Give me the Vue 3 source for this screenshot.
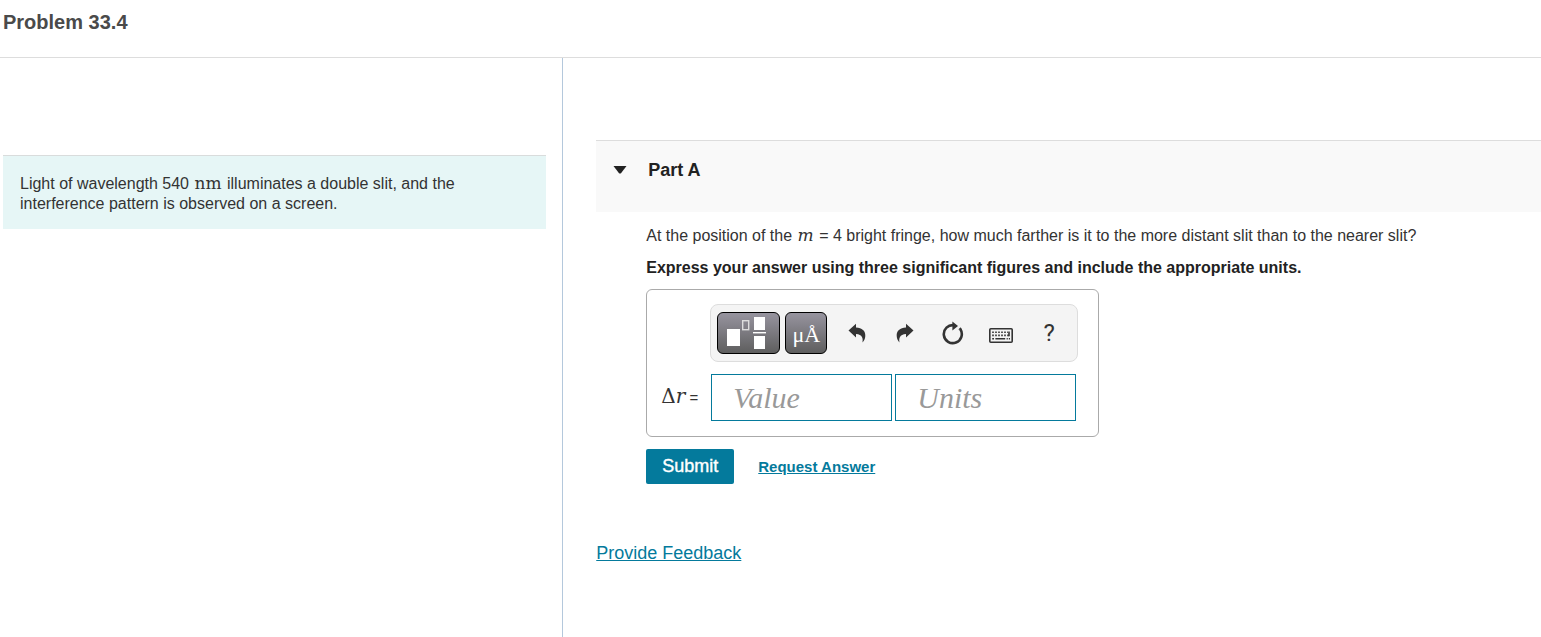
<script setup>
import { ref } from 'vue'

const open = ref(true)
const value = ref('')
const units = ref('')

const reset = () => {
  value.value = ''
  units.value = ''
}
</script>

<template>
  <div class="page">
    <header class="page-header">
      <h1>Problem 33.4</h1>
    </header>

    <div class="columns">
      <aside class="intro-pane">
        <p class="intro">
          Light of wavelength 540 <span class="math">nm</span> illuminates a double slit, and the interference pattern is observed on a screen.
        </p>
      </aside>

      <main class="work-pane">
        <header class="part-header">
          <button type="button" class="part-toggle" :aria-expanded="open" @click="open = !open">
            <svg viewBox="0 0 14 8" width="14" height="8">
              <path fill="currentColor" d="M0.5 0H13.5L8 7.2Q7 8 6 7.2Z" />
            </svg>
            <span>Part A</span>
          </button>
        </header>

        <section v-show="open" class="part-body">
          <p class="question">
            At the position of the <i class="math">m</i> = 4 bright fringe, how much farther is it to the more distant slit than to the nearer slit?
          </p>
          <p class="instructions">Express your answer using three significant figures and include the appropriate units.</p>

          <form @submit.prevent>
            <div class="answer-box">
              <div class="toolbar">
                <button type="button" class="tool-dark templates" aria-label="Templates">
                  <svg viewBox="0 0 40 32" width="40" height="32">
                    <rect x="1" y="12" width="13" height="17" fill="#fff" />
                    <rect x="16.7" y="3.7" width="6" height="9" fill="none" stroke="#ddd" stroke-width="1.4" />
                    <rect x="28" y="0" width="11" height="13" fill="#fff" />
                    <rect x="27" y="15" width="13" height="1.4" fill="#fff" />
                    <rect x="28" y="19" width="11" height="13" fill="#fff" />
                  </svg>
                </button>
                <button type="button" class="tool-dark symbols" aria-label="Symbols">μÅ</button>
                <button type="button" class="tool" aria-label="Undo">
                  <svg viewBox="0 0 18 20" width="18" height="20">
                    <path fill="currentColor" d="M0.5 7.5L8 0.8V4.6C14 4.8 17.6 8 17.3 13C17.2 15.8 16 18 14.4 19.6C15.4 15.8 14.4 11.2 8 11V14.4Z" />
                  </svg>
                </button>
                <button type="button" class="tool" aria-label="Redo">
                  <svg viewBox="0 0 18 20" width="18" height="20">
                    <path fill="currentColor" d="M17.5 7.5L10 0.8V4.6C4 4.8 0.4 8 0.7 13C0.8 15.8 2 18 3.6 19.6C2.6 15.8 3.6 11.2 10 11V14.4Z" />
                  </svg>
                </button>
                <button type="button" class="tool" aria-label="Reset" @click="reset">
                  <svg viewBox="0 0 22 24" width="22" height="24">
                    <path fill="none" stroke="currentColor" stroke-width="2.6" d="M12 4.2A9 9 0 1 0 18.2 8" />
                    <path fill="currentColor" d="M10.4 0.4L16 5L10.4 9.6Z" />
                    <path fill="currentColor" d="M16.3 8.6L18.6 6.2L20 9Z" />
                  </svg>
                </button>
                <button type="button" class="tool keyboard" aria-label="Keyboard shortcuts">
                  <svg viewBox="0 0 24 15" width="24" height="15">
                    <rect x="0.8" y="0.8" width="22.4" height="13.4" rx="1" fill="none" stroke="currentColor" stroke-width="1.6" />
                    <g stroke="currentColor" stroke-width="1.6">
                      <path stroke-dasharray="1.6 1.4" d="M3.2 4.2H19" />
                      <path stroke-dasharray="1.6 1.4" d="M3.2 7.4H21" />
                      <path d="M20 3.4V8.2M3.2 10.8H5M6.4 10.8H16.2M17.6 10.8H18.8M19.8 10.8H21" />
                    </g>
                  </svg>
                </button>
                <button type="button" class="tool help" aria-label="Help">?</button>
              </div>

              <div class="answer-row">
                <label for="value"><span class="math">Δ<i>r</i></span> =</label>
                <div class="fields">
                  <input id="value" v-model="value" type="text" placeholder="Value" />
                  <input v-model="units" type="text" placeholder="Units" aria-label="Units" />
                </div>
              </div>
            </div>

            <div class="form-actions">
              <button type="submit" class="btn-submit">Submit</button>
              <a href="#" class="request">Request Answer</a>
            </div>
          </form>
        </section>

        <a href="#" class="feedback">Provide Feedback</a>
      </main>
    </div>
  </div>
</template>

<style>
body {
  margin: 0;
  background: #fff;
}
</style>

<style scoped>
.page {
  display: flex;
  flex-direction: column;
  min-height: 100vh;
  font-family: "Liberation Sans", Arial, sans-serif;
  font-size: 16px;
  line-height: 20px;
  color: #333;
}

.page-header {
  padding: 10px 3px 23px;
  border-bottom: 1px solid #ddd;
}

h1 {
  margin: 0;
  font-size: 20px;
  line-height: 24px;
  color: #4a4a4a;
}

.columns {
  display: flex;
  flex: 1;
}

.intro-pane {
  box-sizing: border-box;
  width: 36.55%;
  padding: 97px 16px 0 3px;
  border-right: 1px solid #b4c8dc;
}

.intro {
  margin: 0;
  padding: 18px 80px 15px 17px;
  border-top: 1px solid #d9dcdc;
  background: #e6f6f6;
}

.math {
  margin: 0 1px;
  font-family: "DejaVu Serif", serif;
  font-size: 17px;
  line-height: 16px;
}

.work-pane {
  flex: 1;
  padding: 82px 0 0 33px;
}

.part-header {
  padding: 19px 17px 32px;
  border-top: 1px solid #ddd;
  background: #f9f9f9;
}

.part-toggle {
  display: flex;
  align-items: center;
  gap: 21px;
  padding: 0;
  border: none;
  background: none;
  color: #222;
  font: bold 18px/20px "Liberation Sans", Arial, sans-serif;
  cursor: pointer;
}

.part-body {
  padding: 14px 0 0 50px;
}

.question {
  margin: 0 0 12px;
}

.instructions {
  margin: 0 0 11px;
  font-weight: bold;
  color: #222;
}

.answer-box {
  box-sizing: border-box;
  width: fit-content;
  padding: 14px 20px 15px 14px;
  border: 1px solid #aaa;
  border-radius: 6px;
}

.toolbar {
  display: flex;
  align-items: center;
  margin-left: 49px;
  padding: 7px 4px 7px 6px;
  border: 1px solid #ddd;
  border-radius: 8px;
  background: #f4f4f4;
}

.toolbar button {
  display: flex;
  align-items: center;
  justify-content: center;
  box-sizing: border-box;
  height: 42px;
  cursor: pointer;
}

.tool-dark {
  border: 1px solid #000;
  border-radius: 6px;
  background: linear-gradient(#97949f, #5e5e5e);
  color: #fff;
}

.templates {
  width: 63px;
  margin-right: 5px;
  padding: 0 5px 0 0;
}

.symbols {
  width: 42px;
  margin-right: 6px;
  padding: 4px 0 0;
  font: 22px/24px "Liberation Serif", serif;
}

.tool {
  width: 48px;
  padding: 0;
  border: none;
  background: none;
  color: #333;
}

.keyboard {
  padding-top: 4px;
}

.help {
  font: 24px/24px Roboto, sans-serif;
}

.answer-row {
  display: flex;
  align-items: center;
  margin-top: 12px;
}

.answer-row label {
  width: 50px;
  font-size: 15px;
  white-space: nowrap;
}

.answer-row .math {
  margin: 0;
  font-size: 20px;
}

.fields {
  display: flex;
  gap: 3px;
}

.fields input {
  box-sizing: border-box;
  width: 181px;
  height: 47px;
  padding: 0 21px;
  border: 1px solid #047a9c;
  border-radius: 0;
  outline: none;
  font: 30px/36px "Liberation Serif", serif;
  color: #333;
}

.fields input::placeholder {
  font-style: italic;
  color: #999;
  opacity: 1;
}

.form-actions {
  display: flex;
  align-items: center;
  gap: 24px;
  margin-top: 12px;
}

.btn-submit {
  padding: 7px 16px 8px;
  border: none;
  border-radius: 2px;
  background: #047a9c;
  color: #fff;
  font: 18px/20px "Liberation Sans", Arial, sans-serif;
  -webkit-text-stroke: 0.4px #fff;
  cursor: pointer;
}

a {
  color: #047a9c;
}

.request {
  font-size: 15px;
  font-weight: bold;
}

.feedback {
  display: inline-block;
  margin-top: 59px;
  font-size: 18px;
}
</style>
